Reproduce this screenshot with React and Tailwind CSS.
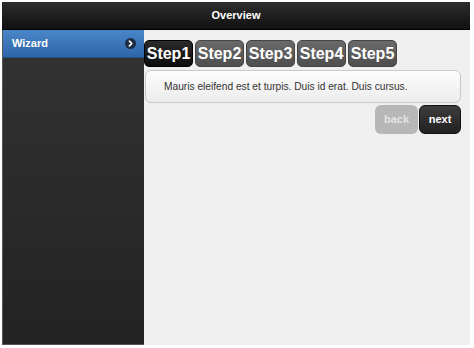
import React from 'react';

const steps = ['Step1', 'Step2', 'Step3', 'Step4', 'Step5'];

const Chevron = () => (
  <svg width="11" height="11" viewBox="0 0 12 12" className="shrink-0">
    <circle cx="6" cy="6" r="6" fill="#1c2c44" />
    <path d="M4.8 3.4 L7.4 6 L4.8 8.6" stroke="#fff" strokeWidth="1.8" fill="none" strokeLinecap="round" strokeLinejoin="round" />
  </svg>
);

const App = () => (
  <div className="w-[474px] h-[348px] bg-white pt-[2px] pl-[2px]" style={{ fontFamily: '"Liberation Sans", Arial, sans-serif' }}>
    <div className="w-[468px] h-[343px] flex flex-col">
      <header className="h-[28px] shrink-0 flex items-center justify-center bg-gradient-to-b from-[#2e2e2e] to-[#111111] border-b border-[#000]">
        <span className="text-white font-bold text-[11px]">Overview</span>
      </header>

      <div className="flex flex-1 min-h-0">
        <aside className="w-[142px] bg-gradient-to-b from-[#333333] to-[#232323] border-l border-b border-[#555] flex flex-col">
          <div className="h-[28px] flex items-center justify-between pl-[9px] pr-[8px] bg-gradient-to-b from-[#4a86c8] to-[#2d66aa] border-b border-[#1f4f86]">
            <span className="text-white font-bold text-[11px]">Wizard</span>
            <Chevron />
          </div>
        </aside>

        <main className="flex-1 bg-[#efefef] pt-[10px] pr-[9px] flex flex-col">
          <nav className="flex gap-[2px]">
            {steps.map((s, i) => (
              <div
                key={s}
                className={`h-[27px] w-[49px] flex items-center justify-center rounded-[5px] text-white font-bold text-[16px] border ${
                  i === 0
                    ? 'bg-gradient-to-b from-[#2a2a2a] to-[#0c0c0c] border-[#000]'
                    : 'bg-gradient-to-b from-[#6a6a6a] to-[#4e4e4e] border-[#444]'
                }`}
              >
                {s}
              </div>
            ))}
          </nav>

          <div className="mt-[3px] ml-[1px] h-[33px] rounded-[6px] border border-[#c8c8c8] bg-gradient-to-b from-[#fdfdfd] to-[#ececec] flex items-center pl-[18px] text-[10.2px] text-[#333]">
            Mauris eleifend est et turpis. Duis id erat. Duis cursus.
          </div>

          <div className="mt-[2px] flex justify-end gap-[1px]">
            <button className="h-[29px] w-[43px] rounded-[6px] bg-[#b7b7b7] text-[#e4e4e4] font-bold text-[11px]">back</button>
            <button className="h-[29px] w-[42px] rounded-[6px] bg-gradient-to-b from-[#3c3c3c] to-[#222] border border-[#111] text-white font-bold text-[11px]">next</button>
          </div>
        </main>
      </div>
    </div>
  </div>
);

export default App;
